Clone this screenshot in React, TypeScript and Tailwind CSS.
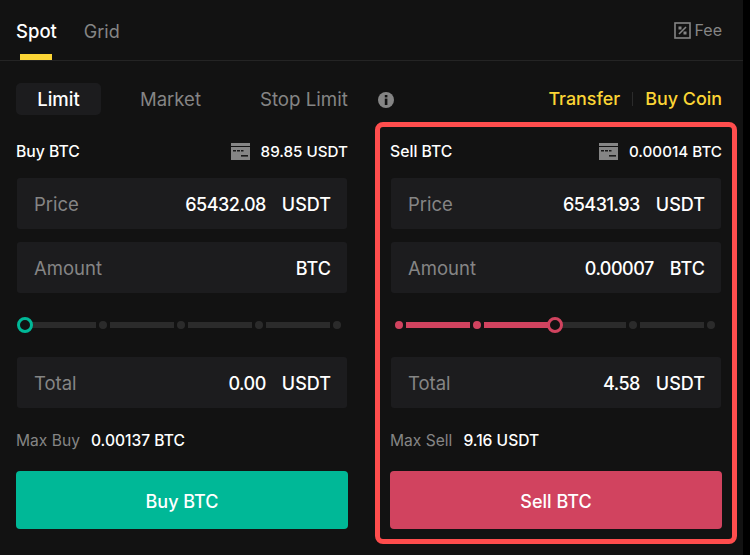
import React from "react";

const font = { fontFamily: '"Inter", "Noto Sans", sans-serif' };

function WalletIcon() {
  return (
    <svg width="19" height="17" viewBox="0 0 19 17" className="shrink-0">
      <rect x="0" y="0" width="19" height="3" fill="#858585" />
      <rect x="0" y="4" width="19" height="13" fill="#858585" />
      <rect x="2" y="7" width="3" height="1.5" fill="#1a1a1a" />
      <rect x="6" y="7" width="3" height="1.5" fill="#1a1a1a" />
      <rect x="10" y="7" width="2.5" height="1.5" fill="#1a1a1a" />
      <rect x="10" y="12" width="7" height="1.6" fill="#1a1a1a" />
    </svg>
  );
}

function FeeIcon() {
  return (
    <svg width="17" height="17" viewBox="0 0 17 17" className="shrink-0">
      <rect x="1" y="1" width="15" height="15" fill="none" stroke="#858585" strokeWidth="1.6" />
      <path d="M12 5 L5 12" stroke="#858585" strokeWidth="1.6" />
      <rect x="4.5" y="4.5" width="3" height="3" fill="#858585" />
      <rect x="9.5" y="9.5" width="3" height="3" fill="#858585" />
    </svg>
  );
}

function InfoIcon() {
  return (
    <svg width="16" height="16" viewBox="0 0 16 16" className="shrink-0">
      <circle cx="8" cy="8" r="8" fill="#858585" />
      <rect x="6.8" y="3" width="2.6" height="2.4" fill="#121212" />
      <rect x="6.8" y="6.6" width="2.6" height="6.4" fill="#121212" />
    </svg>
  );
}

function Field({ label, value, unit }: { label: string; value?: string; unit: string }) {
  return (
    <div className="flex h-[51px] items-center rounded-[3px] bg-[#1c1c1e] pl-[17px] pr-[16px] pt-[1px] text-[18px]">
      <span className="pt-[1px] text-[18.5px] text-[#858585]">{label}</span>
      <span className="ml-auto font-medium tracking-[-0.5px] text-white">{value}</span>
      <span className="ml-4 font-medium text-white">{unit}</span>
    </div>
  );
}

function Slider({ active, color }: { active: number; color: string }) {
  const knobs = [0, 1, 2, 3, 4];
  return (
    <div className="flex h-[64px] items-center pl-[5px] pr-[7px]">
      {knobs.map((k) => (
        <React.Fragment key={k}>
          <div className="relative h-2 w-2 shrink-0">
            <div
              className="h-2 w-2 rounded-full"
              style={{ backgroundColor: k < active ? color : "#2b2b2b" }}
            />
            {k === active && (
              <div
                className="absolute left-[-4px] top-[-4px] h-4 w-4 rounded-full border-[3px] bg-[#121212]"
                style={{ borderColor: color }}
              />
            )}
          </div>
          {k < 4 && (
            <div
              className="mx-[3px] h-[6px] flex-1"
              style={{ backgroundColor: k < active ? color : "#2b2b2b" }}
            />
          )}
        </React.Fragment>
      ))}
    </div>
  );
}

function Column(props: {
  title: string;
  balance: string;
  price: string;
  amount?: string;
  total: string;
  maxLabel: string;
  maxValue: string;
  button: string;
  buttonClass: string;
  active: number;
  color: string;
}) {
  return (
    <div className="flex w-[332px] flex-col">
      <div className="flex h-[27px] items-center justify-between pt-[3px] font-medium text-white">
        <span className="text-[15.75px]">{props.title}</span>
        <span className="flex items-center gap-[11px] text-[15.2px]">
          <WalletIcon />
          {props.balance}
        </span>
      </div>
      <div className="mx-px mt-[14px] flex flex-col gap-[13px]">
        <Field label="Price" value={props.price} unit="USDT" />
        <Field label="Amount" value={props.amount} unit="BTC" />
      </div>
      <Slider active={props.active} color={props.color} />
      <div className="mx-px">
        <Field label="Total" value={props.total} unit="USDT" />
      </div>
      <div className="mt-[21px] flex h-[22px] items-center gap-[11px] pt-[2px] text-[15.6px]">
        <span className="text-[#858585]">{props.maxLabel}</span>
        <span className="font-medium text-white">{props.maxValue}</span>
      </div>
      <button
        className={`mt-[20px] flex h-[58px] items-center justify-center rounded-[4px] pt-[2px] text-[18px] font-medium text-white ${props.buttonClass}`}
      >
        {props.button}
      </button>
    </div>
  );
}

export default function App() {
  return (
    <div className="h-[555px] w-[750px] overflow-hidden bg-black" style={font}>
      <div className="relative h-[555px] w-[743px] bg-[#121212]">
        <div className="flex h-[61px] items-start border-b border-[#242424] px-[16px]">
          <div className="relative flex h-[60px] items-center pt-[3px] text-[18.5px] font-medium text-white">
            Spot
            <div className="absolute bottom-0 left-[4px] h-[6px] w-[32px] bg-[#fcd535]" />
          </div>
          <div className="ml-[27px] flex h-[60px] items-center pt-[3px] text-[18px] text-[#858585]">Grid</div>
          <div className="ml-auto mr-[5px] flex h-[60px] items-center gap-[4px] text-[16px] text-[#858585]">
            <FeeIcon />
            Fee
          </div>
        </div>
        <div className="mt-[22px] flex h-[32px] items-center pl-[16px] pr-[21px] pt-[1px] text-[18.5px]">
          <div className="-mt-[1px] flex h-[32px] w-[85px] items-center justify-center rounded-[5px] bg-[#1c1c1e] pt-[2px] font-medium text-white">
            Limit
          </div>
          <div className="ml-[39px] text-[#858585]">Market</div>
          <div className="ml-[59px] pt-[2px] text-[18.7px] text-[#858585]">Stop Limit</div>
          <div className="ml-[30px]">
            <InfoIcon />
          </div>
          <div className="ml-auto flex items-center text-[17.9px] font-medium text-[#fcd535]">
            Transfer
            <span className="mx-[12px] h-[14px] w-px bg-[#2b2b2b]" />
            Buy Coin
          </div>
        </div>
        <div className="mt-[22px] flex gap-[42px] pl-[16px]">
          <Column
            title="Buy BTC"
            balance="89.85 USDT"
            price="65432.08"
            total="0.00"
            maxLabel="Max Buy"
            maxValue="0.00137 BTC"
            button="Buy BTC"
            buttonClass="bg-[#00b897]"
            active={0}
            color="#00b897"
          />
          <Column
            title="Sell BTC"
            balance="0.00014 BTC"
            price="65431.93"
            amount="0.00007"
            total="4.58"
            maxLabel="Max Sell"
            maxValue="9.16 USDT"
            button="Sell BTC"
            buttonClass="bg-[#d1435f]"
            active={2}
            color="#d1435f"
          />
        </div>
        <div className="pointer-events-none absolute left-[375px] top-[122px] h-[422px] w-[362px] rounded-[8px] border-[5px] border-[#ff4d4d]" />
      </div>
    </div>
  );
}
